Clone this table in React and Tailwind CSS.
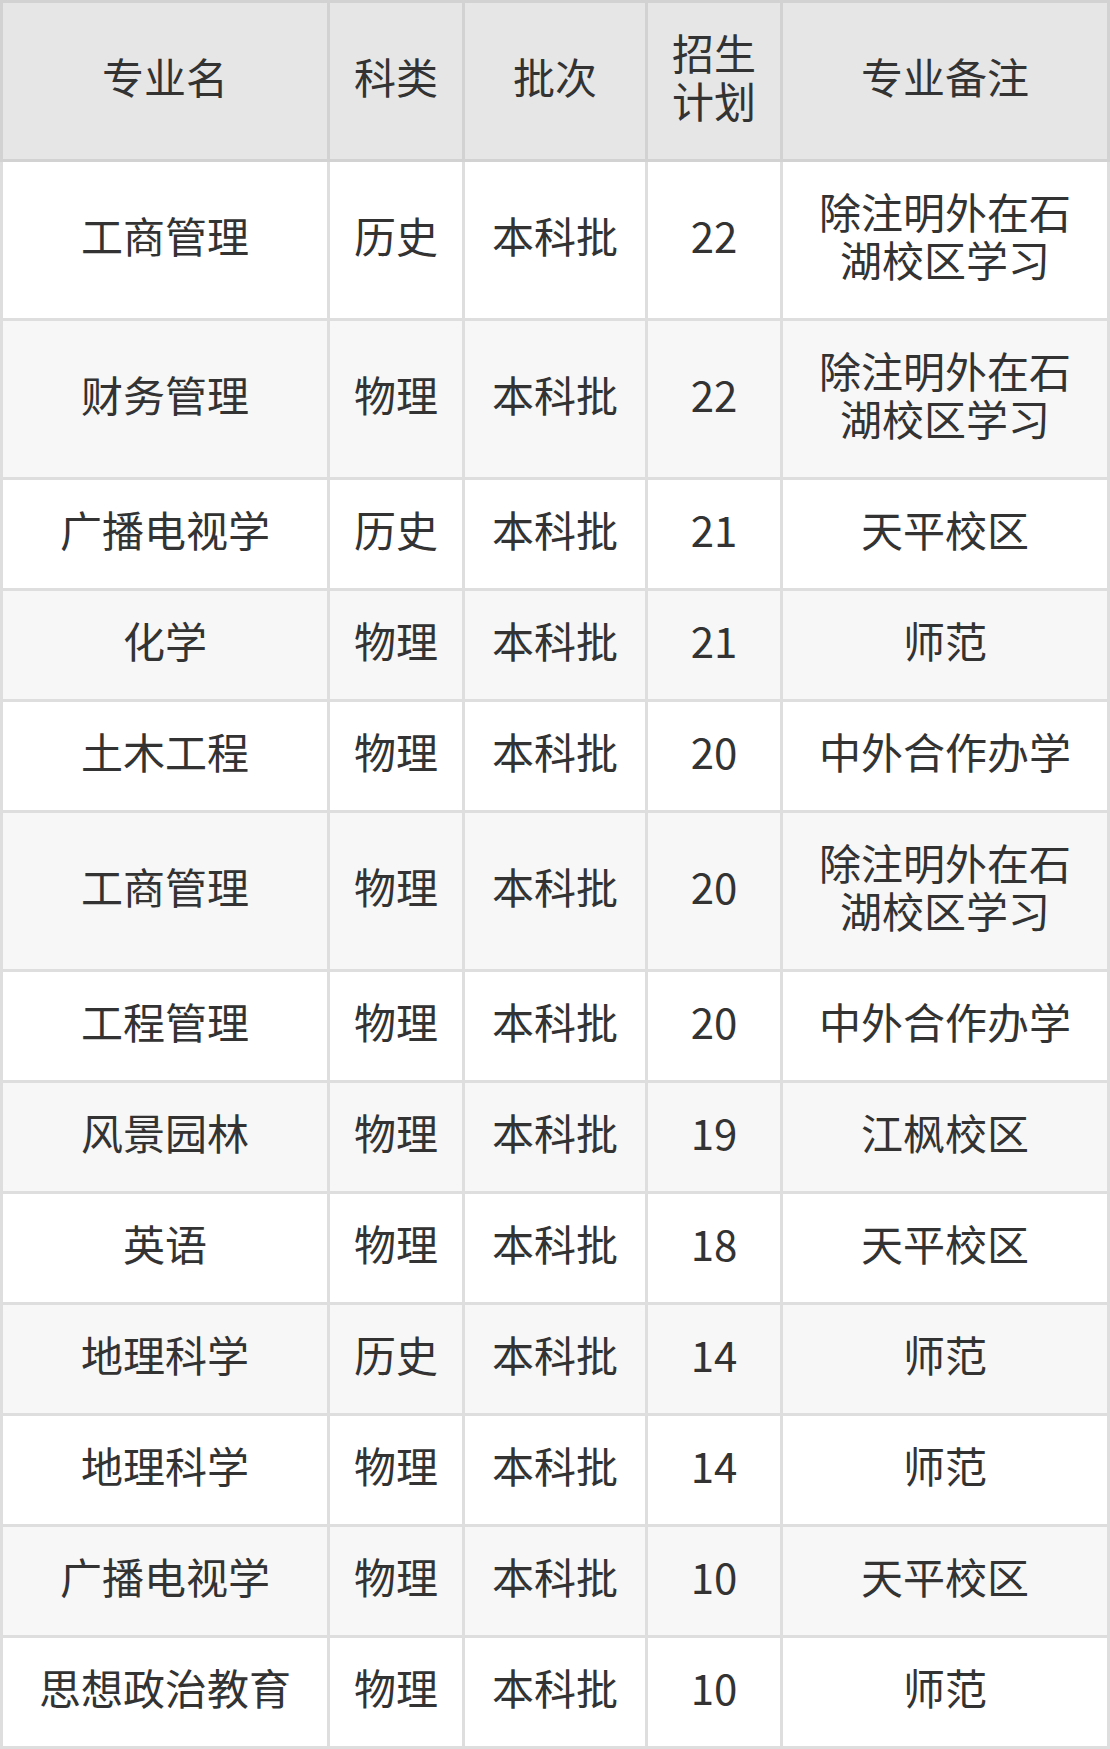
const rows = [
  ["工商管理", "历史", "本科批", "22", "除注明外在石湖校区学习"],
  ["财务管理", "物理", "本科批", "22", "除注明外在石湖校区学习"],
  ["广播电视学", "历史", "本科批", "21", "天平校区"],
  ["化学", "物理", "本科批", "21", "师范"],
  ["土木工程", "物理", "本科批", "20", "中外合作办学"],
  ["工商管理", "物理", "本科批", "20", "除注明外在石湖校区学习"],
  ["工程管理", "物理", "本科批", "20", "中外合作办学"],
  ["风景园林", "物理", "本科批", "19", "江枫校区"],
  ["英语", "物理", "本科批", "18", "天平校区"],
  ["地理科学", "历史", "本科批", "14", "师范"],
  ["地理科学", "物理", "本科批", "14", "师范"],
  ["广播电视学", "物理", "本科批", "10", "天平校区"],
  ["思想政治教育", "物理", "本科批", "10", "师范"],
];

const headers = ["专业名", "科类", "批次", "招生计划", "专业备注"];

const cell =
  "flex items-center justify-center text-center px-[16px] pt-[25px] pb-[35px] text-[42px] leading-[48px] text-[#333333] break-all";

export default function App() {
  return (
    <div
      className="w-[1110px] bg-white"
      style={{ fontFamily: '"Noto Sans CJK SC", "Noto Sans", sans-serif' }}
    >
      <div className="bg-[#d2d2d2] p-[3px]">
        <div className="grid grid-cols-[324px_132px_180px_132px_324px] gap-[3px]">
          {headers.map((h) => (
            <div key={h} className={`${cell} bg-[#e6e6e6]`}>
              {h}
            </div>
          ))}
        </div>
      </div>
      <div className="bg-[#dedede] px-[3px] pb-[3px] flex flex-col gap-[3px]">
        {rows.map((r, i) => (
          <div
            key={i}
            className="grid grid-cols-[324px_132px_180px_132px_324px] gap-[3px]"
          >
            {r.map((c, j) => (
              <div
                key={j}
                className={`${cell} ${i % 2 === 1 ? "bg-[#f7f7f7]" : "bg-white"}`}
              >
                {c}
              </div>
            ))}
          </div>
        ))}
      </div>
    </div>
  );
}
